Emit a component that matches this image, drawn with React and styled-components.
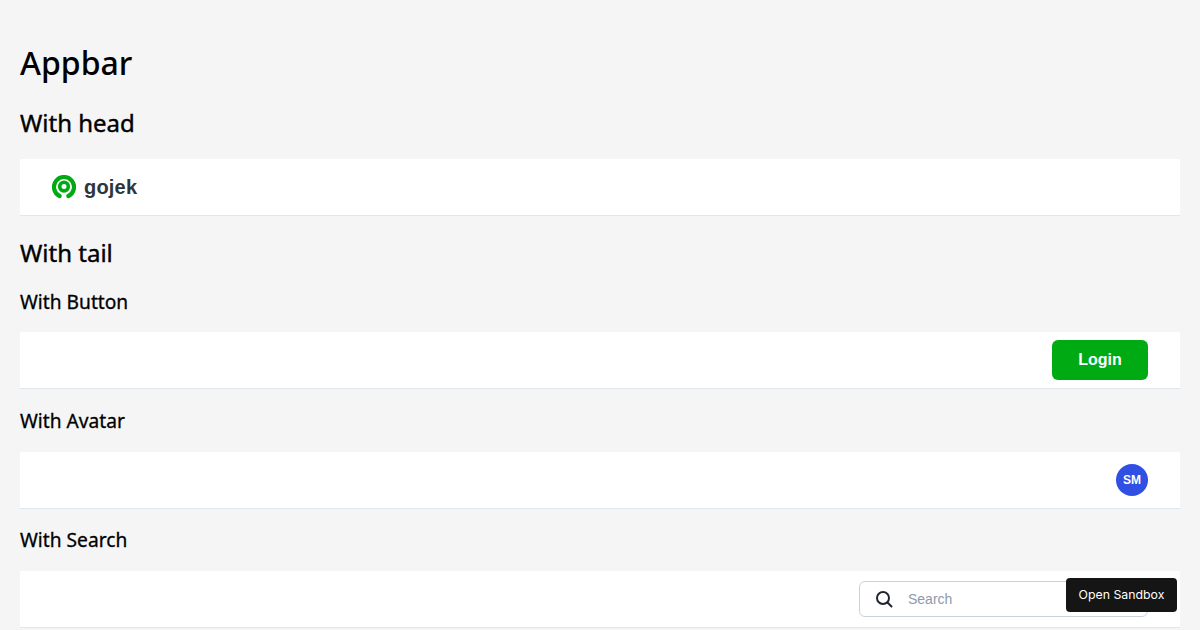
import React from "react";
import styled, { createGlobalStyle } from "styled-components";

const Global = createGlobalStyle`
  html, body { margin: 0; padding: 0; height: 630px; overflow: hidden; background: #f5f5f5; }
  body { font-family: "Noto Sans", sans-serif; color: #000; }
`;
const Page = styled.main`
  display: flex;
  flex-direction: column;
  padding: 0 20px;
`;
const Title = styled.h1`
  font-size: 32px;
  line-height: 44px;
  font-weight: 500;
  margin: 41px 0 0;
`;
const Section = styled.h2`
  font-size: 24px;
  line-height: 32px;
  font-weight: 400;
  -webkit-text-stroke: 0.4px #000;
  margin: ${(p) => p.$top}px 0 20px;
`;
const Sub = styled.h3`
  font-size: 19.2px;
  line-height: 28px;
  font-weight: 400;
  -webkit-text-stroke: 0.3px #000;
  margin: ${(p) => p.$top}px 0 ${(p) => p.$bottom}px;
`;
const Bar = styled.header`
  display: flex;
  align-items: center;
  justify-content: ${(p) => (p.$end ? "flex-end" : "flex-start")};
  height: 56px;
  padding: 0 32px;
  background: #fff;
  border-bottom: 1px solid #e0e6ed;
`;
const Brand = styled.div`
  display: flex;
  align-items: center;
  gap: 8px;
  font: 700 20px "Liberation Sans", sans-serif;
  letter-spacing: 0.2px;
  color: #2d3540;
`;
const Login = styled.button`
  width: 96px;
  height: 40px;
  border: 0;
  border-radius: 6px;
  background: #00aa13;
  color: #fff;
  font: 700 16px "Liberation Sans", sans-serif;
`;
const Avatar = styled.div`
  display: flex;
  align-items: center;
  justify-content: center;
  width: 32px;
  height: 32px;
  border-radius: 50%;
  background: #2f50e3;
  color: #fff;
  font: 700 12px "Liberation Sans", sans-serif;
`;
const Search = styled.label`
  display: flex;
  align-items: center;
  gap: 15px;
  box-sizing: border-box;
  width: 289px;
  height: 36px;
  padding: 0 15px;
  border: 1px solid #c9d1dc;
  border-radius: 6px;
  background: #fff;
`;
const SearchInput = styled.input`
  flex: 1;
  min-width: 0;
  border: 0;
  outline: 0;
  padding: 0;
  font: 14px "Liberation Sans", sans-serif;
  color: #2d3540;
  &::placeholder { color: #8d9aab; opacity: 1; }
`;
const Sandbox = styled.a`
  position: fixed;
  left: 1066px;
  top: 578px;
  display: flex;
  align-items: center;
  justify-content: center;
  box-sizing: border-box;
  width: 111px;
  height: 34px;
  padding-bottom: 2px;
  border-radius: 4px;
  background: #151515;
  color: #fff;
  font: 12.3px Inter, sans-serif;
`;

export default function App() {
  return (
    <>
      <Global />
      <Page>
        <Title>Appbar</Title>
        <Section $top={22}>With head</Section>
        <Bar>
          <Brand>
            <svg width="24" height="24" viewBox="0 0 24 24" aria-hidden="true">
              <path d="M7.6 21A10 10 0 1 1 16.4 21" fill="none" stroke="#00aa13" strokeWidth="4.2" strokeLinecap="round" />
              <circle cx="12" cy="11.6" r="4.3" fill="none" stroke="#00aa13" strokeWidth="3.6" />
            </svg>
            gojek
          </Brand>
        </Bar>
        <Section $top={21}>With tail</Section>
        <Sub $top={-1} $bottom={16}>With Button</Sub>
        <Bar $end>
          <Login>Login</Login>
        </Bar>
        <Sub $top={18} $bottom={17}>With Avatar</Sub>
        <Bar $end>
          <Avatar>SM</Avatar>
        </Bar>
        <Sub $top={17} $bottom={17}>With Search</Sub>
        <Bar $end>
          <Search>
            <svg width="18" height="18" viewBox="0 0 18 18" fill="none" stroke="#1f252d" strokeWidth="2" strokeLinecap="round" aria-hidden="true">
              <circle cx="8" cy="8" r="6" />
              <path d="M12.5 12.5L16.5 16.5" />
            </svg>
            <SearchInput placeholder="Search" />
          </Search>
        </Bar>
      </Page>
      <Sandbox>Open Sandbox</Sandbox>
    </>
  );
}
